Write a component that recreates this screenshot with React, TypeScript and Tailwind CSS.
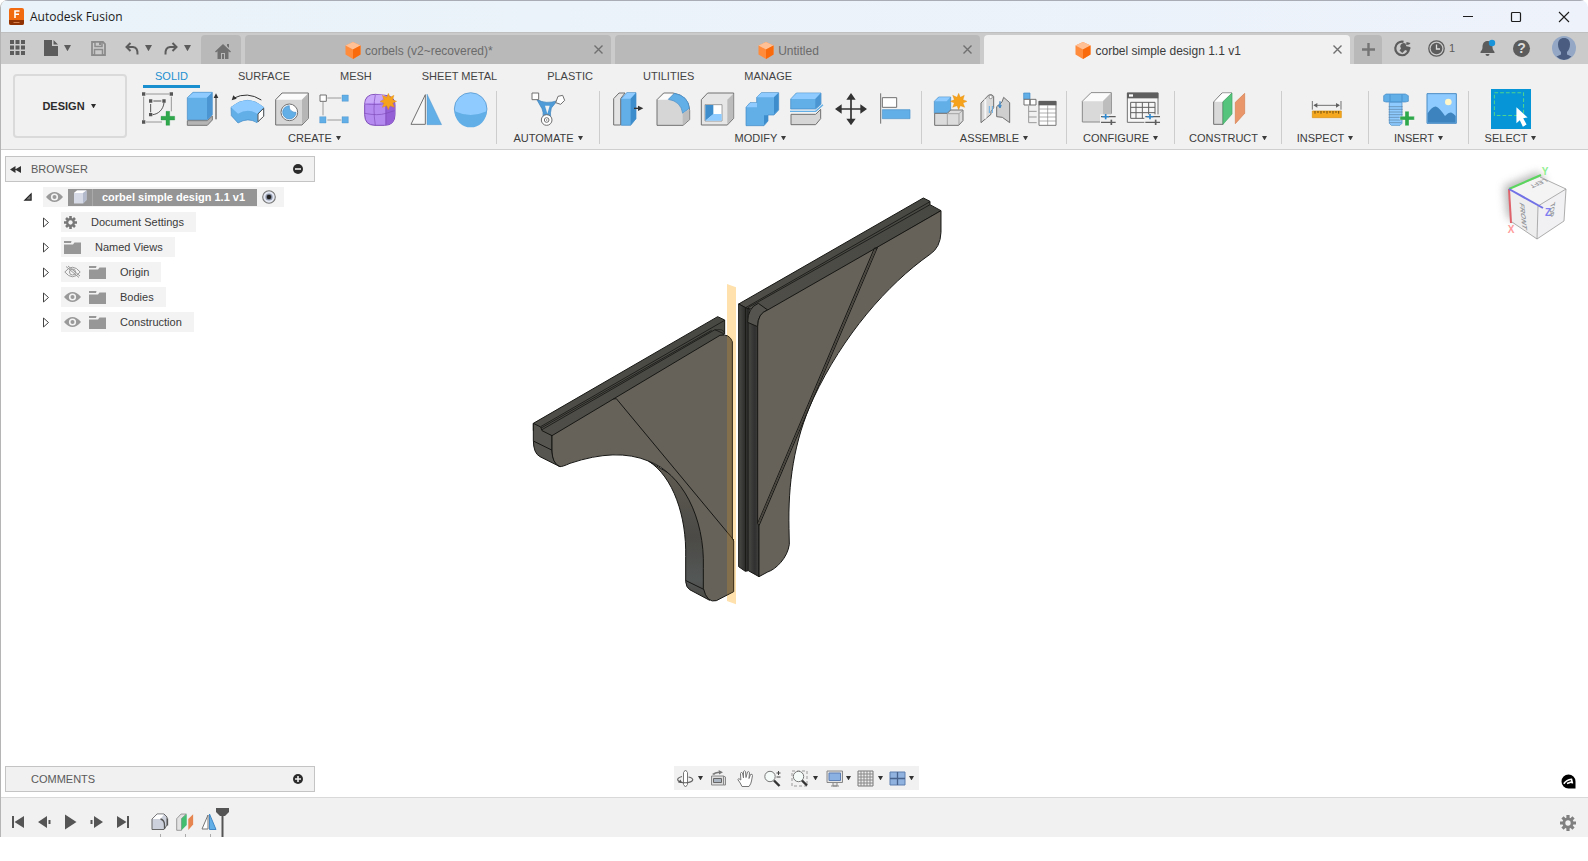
import type { ReactNode } from "react";

type GlyphProps = { box: string; className?: string; children: ReactNode };

function Glyph({ box, className = "size-9", children }: GlyphProps) {
  return (
    <svg viewBox={box} className={`block shrink-0 overflow-visible ${className}`} fill="none" aria-hidden="true">
      {children}
    </svg>
  );
}

function Caret({ className = "w-[5px]" }: { className?: string }) {
  return (
    <svg viewBox="0 0 10 9" className={`block shrink-0 ${className}`} aria-hidden="true">
      <path d="M0 0h10L5 9z" fill="currentColor" />
    </svg>
  );
}

/* ---------- ribbon icons ---------- */

const ink = "#707070";
const blue = "#62aee6";
const sky = "#8fcbff";
const deep = "#4189c6";

const SketchIcon = () => (
  <Glyph box="419 273 108 108">
    <path d="M440 282h70M433 290v70M440 366h48M516 290v44" stroke="#6a6a6a" strokeWidth="2" />
    <path d="M462 303h24M454 312v25M494 308c-2 20-16 34-34 36" stroke="#555" strokeWidth="3" />
    <g fill="#555">
      <path d="M428 277h10v10h-10zM511 277h10v10h-10zM428 361h10v10h-10zM449 298h10v10h-10zM489 298h10v10h-10zM449 339h10v10h-10z" />
    </g>
    <path d="M500 334h11v15h15v11h-15v16h-11v-16h-15v-11h15z" fill="#2fa84c" stroke="#1e9140" strokeWidth="1" />
  </Glyph>
);

const ExtrudeIcon = () => (
  <Glyph box="554 273 108 108">
    <path d="M564 362h60l15-14v12l-15 16h-60z" fill="#b5b5b5" stroke="#777" strokeWidth="3" />
    <path d="M564 293l17-16h58v67l-15 15h-60z" fill={blue} stroke={deep} strokeWidth="2" />
    <path d="M565 293l17-15h56l-15 15z" fill={sky} />
    <path d="M623 293l15-15v66l-15 15z" fill="#4a95d2" />
    <path d="M650 358v-66" stroke="#333" strokeWidth="3" />
    <path d="M643 294l7-14 7 14z" fill="#333" />
  </Glyph>
);

const RevolveIcon = () => (
  <Glyph box="689 273 108 108">
    <path d="M695 322q50-42 98 0v25l-20 21q-27-17-57 1l-20-22z" fill={blue} stroke={deep} strokeWidth="2" />
    <path d="M695 322q50-42 98 0l-20 19q-27-17-57 0z" fill={sky} />
    <path d="M776 342l17-17v24l-17 16z" fill="#fff" stroke="#555" strokeWidth="3" />
    <path d="M702 295q42-22 84 5" stroke="#333" strokeWidth="3" />
    <path d="M697 301l5-15 10 10z" fill="#333" />
  </Glyph>
);

const HoleIcon = () => (
  <Glyph box="824 273 108 108">
    <path d="M829 299l19-20h79v76l-19 20h-79z" fill="#d6d6d6" stroke={ink} strokeWidth="3" />
    <path d="M831 299l18-18h76l-18 18z" fill="#fbfbfb" />
    <path d="M908 299l18-18v73l-18 19z" fill="#b6b6b6" />
    <circle cx="870" cy="337" r="25" fill="#fff" stroke={ink} strokeWidth="3" />
    <path d="M870 317a20 20 0 1 0 20 20c-12 1-22-9-20-20z" fill={blue} stroke={deep} strokeWidth="2" />
  </Glyph>
);

const PatternIcon = () => (
  <Glyph box="959 273 108 108">
    <path d="M984 294h42M971 306v40M984 360h42" stroke={ink} strokeWidth="2" />
    <path d="M962 285h19v19h-19z" fill="#fff" stroke={ink} strokeWidth="3" />
    <path d="M1028 285h19v19h-19zM1028 350h19v19h-19zM961 350h19v19h-19z" fill={blue} stroke={deep} strokeWidth="1" />
  </Glyph>
);

const Spark = ({ x, y }: { x: number; y: number }) => (
  <path
    transform={`translate(${x} ${y})`}
    d="M0-24l5 12 12-6-4 13 12 5-12 5 5 13-13-5-5 12-5-12-13 5 5-13-12-5 12-5-5-13 13 6z"
    fill="#f6a21c"
    stroke="#e08a00"
    strokeWidth="1"
  />
);

const FormIcon = () => (
  <Glyph box="1094 273 108 108">
    <path d="M1096 313q0-30 32-30l30 3q29 3 29 28v30q0 32-32 32h-28q-31 0-31-32z" fill="#b48af0" stroke="#7e4cb8" strokeWidth="3" />
    <path d="M1097 312q2-28 32-28h28l-16 26q-24-4-44 2z" fill="#c9a8fa" />
    <path d="M1158 310q20-6 28 0v34q0 30-28 31z" fill="#9560d6" />
    <path d="M1096 340q40 8 64 0l26-8M1128 284q-8 40 0 92M1160 310v65M1097 312q40 4 62-2" stroke="#7e4cb8" strokeWidth="2" />
    <Spark x={1167} y={304} />
  </Glyph>
);

const MirrorIcon = () => (
  <Glyph box="25 273 108 108">
    <path d="M74 284v89H31z" fill="#f7f7f7" stroke={ink} strokeWidth="3" />
    <path d="M79 282l44 92H79z" fill={blue} stroke={deep} strokeWidth="1" />
  </Glyph>
);

const SphereIcon = () => (
  <Glyph box="161 273 108 108">
    <circle cx="211" cy="327" r="49" fill={sky} stroke={deep} strokeWidth="2" />
    <path d="M163 334q48 22 96 0a48 48 0 0 1-96 0z" fill={blue} />
  </Glyph>
);

const AutomateIcon = () => (
  <Glyph box="392 273 108 108">
    <path d="M412 298q28 16 62 4l-18 22q-4 14-2 30h-23q2-18-3-28z" fill="#4e9bd8" stroke="#3a7fb8" strokeWidth="2" />
    <path d="M437 317h14l-7 24z" fill="#f1f1f1" />
    <path d="M398 279h20v20h-20z" fill="#fff" stroke={ink} strokeWidth="3" />
    <path d="M476 289l14-3 6 15-12 12-15-5z" fill="#fff" stroke={ink} strokeWidth="3" />
    <circle cx="442" cy="360" r="16" fill="#fff" stroke={ink} strokeWidth="3" />
    <circle cx="442" cy="360" r="7" stroke={ink} strokeWidth="3" />
    <circle cx="442" cy="360" r="2" fill={ink} />
  </Glyph>
);

const PressPullIcon = () => (
  <Glyph box="624 273 108 108">
    <path d="M641 296l16-17h18l-13 17v79h-21z" fill="#e4e4e4" stroke={ink} strokeWidth="3" />
    <path d="M664 296l16-18h28v78l-16 20h-28z" fill={blue} stroke={deep} strokeWidth="2" />
    <path d="M665 296l16-17h26l-15 17z" fill={sky} />
    <path d="M692 296l16-17v77l-16 19z" fill="#3d8dcc" />
    <path d="M702 325h14" stroke="#333" strokeWidth="4" />
    <path d="M714 317l16 8-16 8z" fill="#333" />
  </Glyph>
);

const FilletIcon = () => (
  <Glyph box="759 273 108 108">
    <path d="M771 299l20-20h28q48 8 50 52v28l-20 17h-78z" fill="#d6d6d6" stroke={ink} strokeWidth="3" />
    <path d="M773 299l19-18h28l-16 18z" fill="#fbfbfb" />
    <path d="M805 298l18-18q42 8 45 45l-20 15q-5-36-43-42z" fill={blue} stroke={deep} strokeWidth="2" />
    <path d="M848 341l20-14v32l-20 16z" fill="#bdbdbd" />
  </Glyph>
);

const ShellIcon = () => (
  <Glyph box="894 273 108 108">
    <path d="M904 299l19-20h78v76l-19 20h-78z" fill="#e6e6e6" stroke={ink} strokeWidth="3" />
    <path d="M982 299l18-18v73l-18 19z" fill="#bcbcbc" />
    <path d="M915 314h51v49h-51z" fill="#fff" stroke="#777" strokeWidth="2" />
    <path d="M916 315h24v28l-24 19z" fill="#3d8dcc" />
    <path d="M916 362l24-20h25v20z" fill={sky} />
  </Glyph>
);

const CombineIcon = () => (
  <Glyph box="1029 273 108 108">
    <path d="M1038 322l12-14h20v-16l14-14h52v52l-14 15h-18v18l-12 14h-54z" fill={blue} stroke={deep} strokeWidth="2" />
    <path d="M1070 292l14-13h51l-13 13zM1039 322l12-13h20v13z" fill={sky} />
    <path d="M1122 292l13-13v50l-13 14zM1092 346h12v16l-12 13z" fill="#3d8dcc" />
  </Glyph>
);

const SplitIcon = () => (
  <Glyph box="-36 273 108 108">
    <path d="M-28 297l17-18h74v34l-16 14h-75z" fill={blue} stroke={deep} strokeWidth="2" />
    <path d="M-27 297l17-17h72l-16 17z" fill={sky} />
    <path d="M46 297l16-17v32l-16 14z" fill="#4a95d2" />
    <path d="M-30 334h77l22-20" stroke={blue} strokeWidth="4" />
    <path d="M-27 343h74l15-15v28l-15 18h-74z" fill="#d6d6d6" stroke={ink} strokeWidth="3" />
  </Glyph>
);

const MoveIcon = () => (
  <Glyph box="99 273 108 108">
    <path d="M153 292v70M118 327h70" stroke="#333" strokeWidth="5" />
    <path d="M153 279l14 20h-28zM153 376l14-20h-28zM105 327l20-14v28zM201 327l-20-14v28z" fill="#333" />
  </Glyph>
);

const AlignIcon = () => (
  <Glyph box="234 273 108 108">
    <path d="M242 280v91" stroke={ink} strokeWidth="3" />
    <path d="M247 293h43v29h-43z" fill="#fff" stroke={ink} strokeWidth="3" />
    <path d="M247 329h83v27h-83z" fill={blue} stroke="#4d94cb" strokeWidth="2" />
  </Glyph>
);

const NewComponentIcon = () => (
  <Glyph box="395 273 108 108">
    <path d="M405 304l13-13h36v40l-10 9h-39z" fill={blue} stroke={deep} strokeWidth="2" />
    <path d="M406 304l13-12h34l-11 12z" fill={sky} />
    <path d="M406 340h38l10-10h37v32l-13 14h-72z" fill="#dcdcdc" stroke={ink} strokeWidth="3" />
    <path d="M444 341v34M446 341h33l11-10M479 342v33" stroke="#8a8a8a" strokeWidth="2" />
    <Spark x={478} y={304} />
  </Glyph>
);

const JointIcon = () => (
  <Glyph box="530 273 108 108">
    <path d="M545 309l23-24q10-4 15 4v34l-8 12v8l-30 25z" fill="#d9d9d9" stroke={ink} strokeWidth="3" />
    <path d="M558 298v58" stroke="#f7f7f7" strokeWidth="6" />
    <circle cx="574" cy="291" r="5" fill="#fff" stroke={ink} strokeWidth="2" />
    <path d="M570 318v21M579 318v21" stroke={blue} strokeWidth="3" />
    <path d="M608 306l5-14 18 16v60l-22-16-17-2v-30z" fill="#cfcfcf" stroke={ink} strokeWidth="3" />
    <path d="M602 304v20" stroke={deep} strokeWidth="4" />
    <path d="M594 316h14l-6 9z" fill={deep} />
  </Glyph>
);

const BomIcon = () => (
  <Glyph box="665 273 108 108">
    <path d="M688 318v50h24M688 334h24M688 351h24" stroke="#999" strokeWidth="3" />
    <path d="M673 279h19v19h-19z" fill={blue} stroke={deep} strokeWidth="2" />
    <path d="M674 298h18v17h-18zM692 298h18v17h-18z" fill="#fff" stroke={ink} strokeWidth="3" />
    <path d="M719 304h51v72h-51z" fill="#fff" stroke="#777" strokeWidth="3" />
    <path d="M718 303h53v13h-53z" fill="#5f5f5f" />
    <path d="M720 327h50M720 339h50M720 351h50M720 363h50M745 316v60" stroke="#888" strokeWidth="2" />
  </Glyph>
);

const Sliders = ({ x, y }: { x: number; y: number }) => (
  <g transform={`translate(${x} ${y})`}>
    <path d="M-3-5h48v28H-3z" fill="#f1f1f1" />
    <path d="M0 2h44M0 19h44" stroke="#5f5f5f" strokeWidth="4" />
    <path d="M14-6v16" stroke="#2f87cc" strokeWidth="5" />
    <path d="M4 2h20" stroke="#2f87cc" strokeWidth="4" />
    <path d="M31 11v16" stroke="#5f5f5f" strokeWidth="5" />
  </g>
);

const ConfigureIcon = () => (
  <Glyph box="841 273 108 108">
    <path d="M848 304l26-26h61v62l-26 26h-61z" fill="#d9d9d9" stroke="#8a8a8a" strokeWidth="3" />
    <path d="M850 304l25-24h58l-24 24z" fill="#fbfbfb" />
    <path d="M910 304l24-24v60l-24 24z" fill="#bdbdbd" />
    <Sliders x={904} y={348} />
  </Glyph>
);

const ConfigTableIcon = () => (
  <Glyph box="976 273 108 108">
    <path d="M983 279h92v88h-92z" fill="#f7f7f7" stroke={ink} strokeWidth="3" />
    <path d="M982 278h94v17h-94z" fill="#5f5f5f" />
    <path d="M988 283h12v7h-12z" fill="#fff" />
    <path d="M993 307h73v48h-73zM993 322h73M993 338h73M1009 307v48M1028 307v48M1047 307v48" stroke="#5f5f5f" strokeWidth="3" />
    <Sliders x={1037} y={348} />
  </Glyph>
);

const ConstructIcon = () => (
  <Glyph box="68 273 108 108">
    <path d="M79 306l25-27h30l-27 26v68H79z" fill="#d9d9d9" stroke={ink} strokeWidth="3" />
    <path d="M81 305l24-25h28l-26 25z" fill="#fff" />
    <path d="M107 305l27-26v63l-27 31z" fill="#56c47c" stroke="#3fa864" strokeWidth="2" />
    <path d="M144 307l28-27v60l-28 31z" fill="#e8966a" stroke="#d67d4d" strokeWidth="2" />
  </Glyph>
);

const InspectIcon = () => (
  <Glyph box="358 273 108 108">
    <path d="M374 303v26M460 303v26M380 316h74" stroke={ink} strokeWidth="3" />
    <path d="M377 316l12-7v14zM457 316l-12-7v14z" fill="#5f5f5f" />
    <path d="M374 333h87v20h-87z" fill="#f5a81d" stroke="#d98e0b" strokeWidth="2" />
    <path d="M382 333v8M391 333v6M400 333v8M409 333v6M418 333v8M427 333v6M436 333v8M445 333v6M453 333v8" stroke="#6b4a10" strokeWidth="3" />
  </Glyph>
);

const FastenerIcon = () => (
  <Glyph box="572 273 108 108">
    <path d="M589 287l7-5h58l9 5v17l-9 2h-58l-7-2z" fill={blue} stroke={deep} strokeWidth="2" />
    <path d="M608 284v20M644 284v20" stroke={deep} strokeWidth="2" />
    <path d="M606 307h38v63l-6 6h-26l-6-6z" fill={sky} stroke={deep} strokeWidth="2" />
    <path d="M604 320h42M604 328h42M604 336h42M604 344h42M604 352h42M604 360h42M606 368h36" stroke="#5b7f9e" strokeWidth="2" />
    <path d="M653 334h12v15h16v11h-16v17h-12v-17h-15v-11h15z" fill="#2fa84c" stroke="#fff" strokeWidth="1" />
  </Glyph>
);

const ImageIcon = () => (
  <Glyph box="707 273 108 108">
    <path d="M719 281h88v89h-88z" fill={sky} stroke="#4b8cc4" strokeWidth="3" />
    <path d="M721 340q14-22 26-20 10 4 26 28 12-12 20-10 6 3 12 10v20h-84z" fill="#3d83bd" />
    <circle cx="783" cy="306" r="10" fill="#fff6c9" />
  </Glyph>
);

const SelectIcon = () => (
  <Glyph box="0 0 118 118" className="size-10">
    <path d="M0 0h118v118H0z" fill="#0696d7" />
    <path d="M10 11h86v67H10z" stroke="#4fd48d" strokeWidth="3" strokeDasharray="11 6" />
    <path d="M75 54l33 30-13 2 10 19-11 6-9-19-10 9z" fill="#fff" />
  </Glyph>
);

type Group = { label: string; width: string; icons: [string, () => ReactNode][] };

const groups: Group[] = [
  {
    label: "CREATE",
    width: "w-[364px]",
    icons: [
      ["Create Sketch", SketchIcon],
      ["Extrude", ExtrudeIcon],
      ["Revolve", RevolveIcon],
      ["Hole", HoleIcon],
      ["Pattern", PatternIcon],
      ["Create Form", FormIcon],
      ["Mirror", MirrorIcon],
      ["Sphere", SphereIcon],
    ],
  },
  { label: "AUTOMATE", width: "w-[103px]", icons: [["Automated Modeling", AutomateIcon]] },
  {
    label: "MODIFY",
    width: "w-[322px]",
    icons: [
      ["Press Pull", PressPullIcon],
      ["Fillet", FilletIcon],
      ["Shell", ShellIcon],
      ["Combine", CombineIcon],
      ["Split Body", SplitIcon],
      ["Move", MoveIcon],
      ["Align", AlignIcon],
    ],
  },
  {
    label: "ASSEMBLE",
    width: "w-[145px]",
    icons: [
      ["New Component", NewComponentIcon],
      ["Joint", JointIcon],
      ["Bill of Materials", BomIcon],
    ],
  },
  {
    label: "CONFIGURE",
    width: "w-[108px]",
    icons: [
      ["Configure", ConfigureIcon],
      ["Configuration Table", ConfigTableIcon],
    ],
  },
  { label: "CONSTRUCT", width: "w-[107px]", icons: [["Offset Plane", ConstructIcon]] },
  { label: "INSPECT", width: "w-[87px]", icons: [["Measure", InspectIcon]] },
  {
    label: "INSERT",
    width: "w-[100px]",
    icons: [
      ["Insert Fastener", FastenerIcon],
      ["Canvas", ImageIcon],
    ],
  },
  { label: "SELECT", width: "w-[84px]", icons: [["Select", SelectIcon]] },
];

const workspaceTabs = ["SOLID", "SURFACE", "MESH", "SHEET METAL", "PLASTIC", "UTILITIES", "MANAGE"];

function Ribbon() {
  return (
    <section className="flex h-[86px] shrink-0 border-b border-[#cfcfcf] bg-[#f1f1f1] pl-3">
      <button className="mt-2.5 flex h-16 w-[114px] shrink-0 items-center justify-center gap-1.5 rounded border-2 border-[#dadada] pr-0.5 text-[11px] font-bold text-[#2c2c2c]">
        DESIGN
        <Caret />
      </button>
      <div className="ml-1.5 min-w-0">
        <nav className="ml-[22px] flex h-6 gap-[50px] text-[11px] text-[#444]">
          {workspaceTabs.map((tab, i) => (
            <button
              key={tab}
              className={
                i === 0
                  ? "-mx-3 border-b-3 border-[#1a8fd0] px-3 pt-1 text-[#1a8fd0]"
                  : "border-b-3 border-transparent pt-1"
              }
            >
              {tab}
            </button>
          ))}
        </nav>
        <div className="mt-[3px] flex">
          {groups.map((group, i) => (
            <div
              key={group.label}
              className={`flex h-[53px] shrink-0 flex-col items-center border-r ${group.width} ${
                i === groups.length - 1 ? "border-transparent" : "border-[#cdcdcd]"
              }`}
            >
              <div className="flex h-[35px] items-center">
                {group.icons.map(([name, Icon]) => (
                  <button key={name} aria-label={name} className="flex w-[45px] justify-center">
                    <Icon />
                  </button>
                ))}
              </div>
              <button className="mt-1 flex items-center gap-1 text-[11px] leading-4 text-[#3c3c3c]">
                {group.label}
                <Caret />
              </button>
            </div>
          ))}
        </div>
      </div>
    </section>
  );
}

/* ---------- title and document tabs ---------- */

function TitleBar() {
  return (
    <header className="flex h-8 shrink-0 items-center border-t border-[#a9abb5] bg-gradient-to-r from-[#eaf3f9] to-[#edf2fb] pl-2">
      <Glyph box="0 0 15 17" className="h-[17px] w-[15px]">
        <rect width="15" height="17" rx="2" fill="#f26a10" />
        <path d="M0 12h15v3a2 2 0 0 1-2 2H2a2 2 0 0 1-2-2z" fill="#8f3305" />
        <path d="M6 10V3h4.500M6 6.300h4" stroke="#fff" strokeWidth="1.600" />
        <path d="M4.500 14.500h6" stroke="#d7804c" />
      </Glyph>
      <h1 className="ml-1.5 font-['Open_Sans','Noto_Sans',sans-serif] text-xs text-[#1b1b1b]">Autodesk Fusion</h1>
      <div className="ml-auto flex text-[#1d1d1d]">
        <button aria-label="Minimize" className="flex h-8 w-12 items-center justify-center">
          <Glyph box="0 0 12 12" className="size-3"><path d="M1 5.500h10" stroke="currentColor" /></Glyph>
        </button>
        <button aria-label="Maximize" className="flex h-8 w-12 items-center justify-center">
          <Glyph box="0 0 12 12" className="size-3"><rect x="1.500" y="1.500" width="9" height="9" rx="1" stroke="currentColor" strokeWidth="1.200" /></Glyph>
        </button>
        <button aria-label="Close" className="flex h-8 w-12 items-center justify-center">
          <Glyph box="0 0 12 12" className="size-3"><path d="M1 1l10 10M11 1L1 11" stroke="currentColor" strokeWidth="1.100" /></Glyph>
        </button>
      </div>
    </header>
  );
}

const DocCube = () => (
  <Glyph box="0 0 16 17" className="h-[17px] w-4">
    <path d="M8 0l7.500 3.500v9L8 17 .5 12.500v-9z" fill="#ff8b3d" />
    <path d="M8 0l7.500 3.500L8 7.500.5 3.500z" fill="#ffc095" />
    <path d="M15.500 3.500v9L8 17V7.500z" fill="#f96a0d" />
  </Glyph>
);

function DocTab({ title, active }: { title: string; active?: boolean }) {
  return (
    <div
      className={`flex h-[29px] min-w-0 flex-1 items-center rounded-t pr-[7px] ${
        active ? "bg-[#f1f1f1] text-[#3b3b3b]" : "bg-[#b9b9b9] text-[#6b6b6b]"
      }`}
    >
      <button className="flex min-w-0 flex-1 items-center justify-center gap-1 pt-0.5 text-xs">
        <DocCube />
        <span className="truncate">{title}</span>
      </button>
      <button aria-label={`Close ${title}`}>
        <Glyph box="0 0 11 11" className="size-[11px]">
          <path d="M1.500 1.500l8 8M9.500 1.500l-8 8" stroke="#707070" strokeWidth="1.400" />
        </Glyph>
      </button>
    </div>
  );
}

function DocumentBar() {
  return (
    <div className="flex h-8 shrink-0 items-end border-t border-[#bfbfbf] bg-[#cbcbcb] text-[#5c5c5c]">
      <div className="flex h-8 w-[200px] shrink-0 items-center pl-[9px]">
        <button aria-label="Data panel">
          <Glyph box="0 0 16 16" className="size-4">
            <path d="M0 0h4v4H0zM5.500 0h4v4h-4zM11 0h4v4h-4zM0 5.500h4v4H0zM5.500 5.500h4v4h-4zM11 5.500h4v4h-4zM0 11h4v4H0zM5.500 11h4v4h-4zM11 11h4v4h-4z" fill="currentColor" />
          </Glyph>
        </button>
        <button aria-label="File" className="ml-[18px] flex items-center gap-1.5">
          <Glyph box="0 0 14 16" className="h-4 w-3.5"><path d="M0 0h8v6h6v10H0zM9.500 0L14 4.500H9.500z" fill="currentColor" /></Glyph>
          <Caret className="w-[7px]" />
        </button>
        <button aria-label="Save" className="ml-5">
          <Glyph box="0 0 15 15" className="size-[15px]">
            <path d="M1 1h11l2 2v11H1z" fill="#ccc" stroke="#8b8b8b" strokeWidth="1.800" />
            <path d="M4 1h7v4.500H4zM3.500 8.500h8V14h-8z" fill="#c9c9c9" stroke="#8b8b8b" strokeWidth="1.500" />
            <path d="M8 1h2v3H8z" fill="#8b8b8b" />
          </Glyph>
        </button>
        <button aria-label="Undo" className="ml-[19px] flex items-center gap-1.5">
          <Glyph box="0 0 14 13" className="h-[13px] w-3.5">
            <path d="M1.500 5h6.500Q13 5.500 12.500 12.500M5.500 1L1.500 5l4 4" stroke="currentColor" strokeWidth="2" />
          </Glyph>
          <Caret className="w-[7px]" />
        </button>
        <button aria-label="Redo" className="ml-3 flex items-center gap-1.5">
          <Glyph box="0 0 14 13" className="h-[13px] w-3.5">
            <path d="M12.500 5H6Q1 5.500 1.500 12.500M8.500 1l4 4-4 4" stroke="currentColor" strokeWidth="2" />
          </Glyph>
          <Caret className="w-[7px]" />
        </button>
      </div>
      <div className="flex min-w-0 flex-1 gap-1">
        <button aria-label="Home" className="flex h-[29px] w-10 shrink-0 items-center justify-center rounded-t bg-[#b9b9b9] pt-1 pl-1">
          <Glyph box="0 0 16 15" className="h-[15px] w-4">
            <path d="M8 0l8 7.500-1 1-1.500-1.300V15H10V9H6v6H2.500V7.200L1 8.500l-1-1zM12 0h2v4l-2-2z" fill="#707070" />
            <path d="M7 10h2v5H7z" fill="#707070" />
          </Glyph>
        </button>
        <DocTab title="corbels (v2~recovered)*" />
        <DocTab title="Untitled" />
        <DocTab title="corbel simple design 1.1 v1" active />
        <button aria-label="New design" className="flex h-[29px] w-7 shrink-0 items-center justify-center rounded-t bg-[#b9b9b9]">
          <Glyph box="0 0 13 13" className="size-[13px]"><path d="M6.500 0v13M0 6.500h13" stroke="#757575" strokeWidth="2.400" /></Glyph>
        </button>
      </div>
      <div className="flex h-8 w-[206px] shrink-0 items-center pl-3">
        <button aria-label="Extensions">
          <Glyph box="0 0 17 17" className="size-[17px]">
            <path d="M14.800 7.500A6.800 6.800 0 1 1 9.500 1.800" stroke="currentColor" strokeWidth="2.200" />
            <path d="M6.200 6.500a3.600 3.600 0 0 1 5.300-3l.8 2.700 2.800.6 1.700 1a3.600 3.600 0 0 1-5.600 2.200L8.300 13 5.500 10.500 7 8.500z" fill="currentColor" />
            <path d="M12.500 2l-.3 3 3-.4L16.500 3z" fill="currentColor" />
          </Glyph>
        </button>
        <button aria-label="Job status" className="ml-[17px] flex items-center gap-1 text-[11px]">
          <Glyph box="0 0 17 17" className="size-[17px]">
            <circle cx="8.500" cy="8.500" r="7.700" stroke="currentColor" strokeWidth="1.300" />
            <circle cx="8.500" cy="8.500" r="5.800" fill="currentColor" />
            <path d="M8.500 4.500v4.500h3.500" stroke="#ddd" strokeWidth="1.300" />
          </Glyph>
          1
        </button>
        <button aria-label="Notifications" className="ml-[25px]">
          <Glyph box="0 0 16 16" className="size-4">
            <path d="M7 1c-4 .5-4.500 4-4.500 6.500C2.500 10 1 10.500.5 12v1h14v-1c-.5-1.500-2-2-2-4.500C12.500 5 12 1.500 8 1z" fill="currentColor" />
            <path d="M5.500 14h4a2 2 0 0 1-4 0z" fill="currentColor" />
            <circle cx="12" cy="3" r="3.200" fill="#1994da" />
          </Glyph>
        </button>
        <button
          aria-label="Help"
          className="ml-[17px] flex size-[17px] items-center justify-center rounded-full bg-[#5c5c5c] text-sm leading-none font-bold text-[#dcdcdc]"
        >
          ?
        </button>
        <button aria-label="Account" className="ml-[22px]">
          <Glyph box="0 0 24 24" className="size-6">
            <circle cx="12" cy="12" r="12" fill="#94a8c6" />
            <path d="M12 2c4 0 6 2.500 6 6.500 0 3.500-1.500 6-3 7.500v2.500l4.500 2A12 12 0 0 1 12 24a12 12 0 0 1-7.500-3.500L9 18.500V16C7.500 14.500 6 12 6 8.500 6 4.500 8 2 12 2z" fill="#4a5d80" />
          </Glyph>
        </button>
      </div>
    </div>
  );
}

/* ---------- browser tree ---------- */

const Eye = () => (
  <Glyph box="0 0 17 12" className="h-3 w-[17px]">
    <path d="M0 6Q8.500-4 17 6 8.500 16 0 6z" fill="#999" />
    <circle cx="8.500" cy="6" r="3.600" fill="#f3f3f3" />
    <circle cx="8.500" cy="6" r="2" fill="#999" />
  </Glyph>
);

const EyeOff = () => (
  <Glyph box="0 0 17 12" className="h-3 w-[17px]">
    <path d="M.8 6Q8.500-3.500 16.200 6 8.500 15.500.8 6z" stroke="#999" />
    <circle cx="8.500" cy="6" r="3" stroke="#999" />
    <path d="M2 .5l13 11M4 0l12 10" stroke="#999" />
  </Glyph>
);

const Folder = () => (
  <Glyph box="0 0 17 13" className="h-[13px] w-[17px]">
    <path d="M0 3.500h9l1.500-2H17V13H0zM0 0h7.500L7 2H0z" fill="#979797" />
  </Glyph>
);

const Gear = ({ className, hole }: { className: string; hole: string }) => (
  <Glyph box="-9 -9 18 18" className={className}>
    <path d="M0-9v18M-9 0H9M-6.200-6.200L6.200 6.200M-6.200 6.200L6.200-6.200" stroke="currentColor" strokeWidth="3.600" />
    <circle r="6.200" fill="currentColor" />
    <circle r="3" fill={hole} />
  </Glyph>
);

const Twisty = () => (
  <Glyph box="0 0 8 11" className="h-[11px] w-2">
    <path d="M1.500 1v9l5-4.500z" fill="#fff" stroke="#444" />
  </Glyph>
);

const nodes: { label: string; icon: "gear" | "folder"; eye?: "on" | "off" }[] = [
  { label: "Document Settings", icon: "gear" },
  { label: "Named Views", icon: "folder" },
  { label: "Origin", icon: "folder", eye: "off" },
  { label: "Bodies", icon: "folder", eye: "on" },
  { label: "Construction", icon: "folder", eye: "on" },
];

function PanelBar({ title, sign, collapsible }: { title: string; sign: "plus" | "minus"; collapsible?: boolean }) {
  return (
    <div className="flex h-[26px] w-[310px] items-center border border-[#c4c4c4] bg-[#f1f1f1] pr-[11px] pl-1 text-[11px] text-[#5a5a5a]">
      <div className="w-[21px]">
        {collapsible && (
          <button aria-label="Collapse panel" className="block">
            <Glyph box="0 0 11 7" className="h-[7px] w-[11px]"><path d="M5.500 0v7L0 3.500zM11 0v7L5 3.500z" fill="#333" /></Glyph>
          </button>
        )}
      </div>
      <h2>{title}</h2>
      <button aria-label={`${title} options`} className="ml-auto">
        <Glyph box="0 0 10 10" className="size-2.5">
          <circle cx="5" cy="5" r="5" fill="#2b2b2b" />
          <path d={sign === "plus" ? "M2 5h6M5 2v6" : "M2 5h6"} stroke="#eee" strokeWidth="1.600" />
        </Glyph>
      </button>
    </div>
  );
}

function BrowserPanel() {
  return (
    <aside className="absolute top-1.5 left-1">
      <PanelBar title="BROWSER" sign="minus" collapsible />
      <ul className="mt-[5px] flex flex-col gap-[5px] text-[11px] text-[#3a3a3a]">
        <li className="flex h-5 items-center pl-[19px]">
          <button aria-label="Collapse root">
            <Glyph box="0 0 9 9" className="size-2"><path d="M8 1v7H1z" fill="#777" stroke="#222" strokeWidth="1.300" /></Glyph>
          </button>
          <div className="ml-[11px] flex h-5 items-center bg-[#f3f3f3] pr-2 pl-[3px]">
            <button aria-label="Toggle visibility" className="w-[22px]"><Eye /></button>
            <button className="flex h-[17px] items-center bg-[#959595] pr-3 pl-[5px] font-bold text-white">
              <Glyph box="0 0 14 14" className="size-3.5">
                <path d="M1 3l3-2.500h9.500V10L10 13.500H1z" fill="#d5dae6" />
                <path d="M1 3l3-2.500h9.500L10 3z" fill="#fff" />
                <path d="M13.500.5V10L10 13.500V3z" fill="#b3bacb" />
              </Glyph>
              <span className="ml-[5px] h-[17px] border-l border-[#aaa] pl-[9px] leading-[17px]">corbel simple design 1.1 v1</span>
            </button>
            <button aria-label="Activate component" className="ml-[5px]">
              <Glyph box="0 0 14 14" className="size-3.5">
                <circle cx="7" cy="7" r="6.300" fill="#e4e8f2" stroke="#777" strokeWidth="1.100" />
                <circle cx="7" cy="7" r="3.600" fill="#8a93a8" />
                <circle cx="7" cy="7" r="2.300" fill="#222" />
              </Glyph>
            </button>
          </div>
        </li>
        {nodes.map((node) => (
          <li key={node.label} className="flex h-5 items-center pl-[37px]">
            <button aria-label={`Expand ${node.label}`}><Twisty /></button>
            <div className="ml-[11px] flex h-5 items-center bg-[#f3f3f3] pr-3 pl-[3px]">
              {node.eye && (
                <button aria-label={`Toggle ${node.label}`} className="mr-2">
                  {node.eye === "on" ? <Eye /> : <EyeOff />}
                </button>
              )}
              {node.icon === "gear" ? <span className="text-[#777]"><Gear className="size-[13px]" hole="#f3f3f3" /></span> : <Folder />}
              <span className="ml-3.5">{node.label}</span>
            </div>
          </li>
        ))}
      </ul>
    </aside>
  );
}

/* ---------- 3D model ---------- */

function Model() {
  const face = "#66625a";
  return (
    <svg viewBox="520 190 440 430" className="mt-10 block h-[430px] w-[440px]" role="img" aria-label="Two corbels and a construction plane">
      <defs>
        <linearGradient id="side" x1="0" x2="1" y1="0" y2="0">
          <stop offset="0" stopColor="#4a4a47" />
          <stop offset="0.300" stopColor="#2e2e2c" />
          <stop offset="0.550" stopColor="#434340" />
          <stop offset="0.800" stopColor="#2f302f" />
          <stop offset="1" stopColor="#454543" />
        </linearGradient>
        <linearGradient id="rail" x1="0" x2="1" y1="1" y2="0">
          <stop offset="0" stopColor="#4f4e48" />
          <stop offset="1" stopColor="#484843" />
        </linearGradient>
        <linearGradient id="inner" x1="0" x2="0" y1="0" y2="1">
          <stop offset="0" stopColor="#625d53" />
          <stop offset="0.550" stopColor="#4b4a46" />
          <stop offset="0.850" stopColor="#535756" />
          <stop offset="1" stopColor="#4a4844" />
        </linearGradient>
      </defs>
      <g transform="translate(520 270) scale(0.33333)" strokeLinejoin="round">
        <path d="M621 42l27 10v951l-27-10z" fill="#fee1ad" />
        <g stroke="#161614" strokeWidth="3">
          <path d="M40 460L593 140l21 10v42l-500 310-74-20z" fill="url(#rail)" />
          <path d="M62 470L614 151M66 479L585 179l26 12M62 475L575 181" fill="none" strokeWidth="2.500" />
          <path d="M40 460l22 11 4 11 30 15v50q4 35 24 43l-60-30q-20-10-20-50z" fill="#57554f" />
          <path d="M42 514l55 27" fill="none" />
          <path d="M385 573C460 620 500 740 497 860v75q2 18 12 24l60 32 20-200-90-150z" fill="url(#inner)" />
          <path
            d="M96 497L600 196q28-6 37 19v590l4 8v152l-52 27q-28 8-39-37v-60C555 740 485 610 385 573Q290 533 150 580q-22 10-30 10-24-10-24-50z"
            fill={face}
          />
          <path d="M280 387l9-1 352 424M498 932l53 26" fill="none" />
          <path d="M585 180q25-5 28 8" fill="none" strokeWidth="2" />
        </g>
        <path d="M621 197q12 4 16 18v590l4 8v152l-20 10z" fill="#f0a020" opacity="0.220" />
      </g>
      <g transform="translate(720 185) scale(0.33333)" stroke="#161614" strokeWidth="3" strokeLinejoin="round">
        <path d="M56 357L610 39l20 10v10l33 18L143 380l-66-11z" fill="url(#rail)" />
        <path d="M56 357l21 11 40 20v787l-32-18-9 2-20-14z" fill="url(#side)" />
        <path d="M77 368L630 50M84 368L630 59" fill="none" strokeWidth="2.500" />
        <path d="M77 368v790M84 370v787" fill="none" />
        <path d="M83 412q0-44 32-57l28 20q-30 10-30 50z" fill="#55544e" />
        <path
          d="M143 375L663 77v65q-2 46-33 66C500 300 370 450 280 640 220 770 204 900 207 1030L208 1078C203 1118 168 1153 143 1161L117 1175V1022l-4-7V425q0-40 30-50z"
          fill={face}
        />
        <path d="M463 190L113 1015M472 188L117 1022M462 190l12-2" fill="none" />
        <path d="M467 192L115 1017" stroke="#48453e" strokeWidth="4" />
      </g>
    </svg>
  );
}

function ViewCube() {
  return (
    <svg viewBox="0 0 118 100" className="absolute top-1.5 right-0 h-[100px] w-[118px]" role="img" aria-label="View cube">
      <defs>
        <filter id="soft" x="-50%" y="-50%" width="200%" height="200%">
          <feGaussianBlur stdDeviation="4" />
        </filter>
      </defs>
      <path d="M34 30l34-14 8 10-30 40-9-6z" fill="#999" opacity="0.700" filter="url(#soft)" />
      <path d="M39 33l31-12 26 12-28 17z" fill="#f4f4f5" />
      <path d="M39 33l29 17-1 33-25-17z" fill="#eeeeef" />
      <path d="M68 50l28-17-2 32-27 18z" fill="#f1f1f3" />
      <path d="M70 21l26 12-2 32-27 18-25-17M68 50l28-17M68 50l-1 33" fill="none" stroke="#999" strokeWidth="0.800" />
      <g fill="#97999c" fontFamily="Liberation Sans, sans-serif" fontSize="8" fontWeight="bold" textAnchor="middle">
        <text transform="matrix(-0.800 0.350 -0.600 -0.500 67 26)">LEFT</text>
        <text transform="matrix(0.100 0.950 -0.850 -0.450 51 59)">FRONT</text>
        <text transform="matrix(-0.100 0.900 -0.800 0.400 80 55)">TOP</text>
      </g>
      <path d="M39 33l32-14" stroke="#5ad65e" strokeWidth="2" />
      <path d="M39 33l2 34" stroke="#e0636b" strokeWidth="2" />
      <path d="M39 33l34 19" stroke="#7272e6" strokeWidth="2" />
      <g fontFamily="Liberation Sans, sans-serif" fontSize="10" fontWeight="bold" textAnchor="middle">
        <text x="75" y="19" fill="#8ff08f">Y</text>
        <text x="41" y="77" fill="#ff9a9a">X</text>
        <text x="78" y="60" fill="#7f7ff2">Z</text>
      </g>
    </svg>
  );
}

/* ---------- navigation bar ---------- */

const navIcon = "size-[17px]";

function NavBar() {
  return (
    <div className="absolute inset-x-0 bottom-[7px] flex justify-center pl-1">
      <div className="flex h-6 w-[245px] items-center bg-[#f1f1f1] pr-1.5 pl-[3px] text-[#333]">
        <button aria-label="Orbit" className="flex items-center gap-1">
          <Glyph box="0 0 17 17" className={navIcon}>
            <path d="M8.500 0l2 2.500v12l-2 2.500-2-2.500v-12z" fill="#fff" stroke="#777" />
            <path d="M5 6.500C1 7.500 0 9 1 10.500c2.500 3 12 3 14.500 0 1-1.500-1-3-4-3.500" stroke="#666" strokeWidth="1.200" />
            <path d="M3.500 9.500L5 13l-4-.5z" fill="#555" />
          </Glyph>
          <Caret />
        </button>
        <button aria-label="Look at" className="ml-[7px]">
          <Glyph box="0 0 17 17" className={navIcon}>
            <path d="M1.500 6h12v9h-12zM13.500 6l2 1v8h-2" fill="#ddd" stroke="#888" />
            <path d="M3.500 8.500h8v4h-8z" fill="#aab3c0" stroke="#666" />
            <path d="M2 4q3-2.500 7-2.500L8.500 0 13 2.200 9 4.500V3.300Q5.500 3 4 5z" fill="#777" />
          </Glyph>
        </button>
        <button aria-label="Pan" className="ml-2.5">
          <Glyph box="0 0 17 17" className={navIcon}>
            <path d="M5 16.500Q3.500 13 .8 9.500q.7-2 3 .5L3.500 3.500Q4 1.500 5.500 3L6.500 8 6.500 1.500Q7.500 0 8.500 1.500L9 7.500 10.500 2Q12 1 12.500 2.500L12 8.500l1.500-4Q15.500 3.500 15.500 5.500L14.500 11q-.5 3-2.500 5.500z" fill="#fff" stroke="#777" />
          </Glyph>
        </button>
        <button aria-label="Zoom" className="ml-2.5">
          <Glyph box="0 0 17 17" className={navIcon}>
            <circle cx="6" cy="6.500" r="5.200" fill="#f4fbf8" stroke="#777" />
            <path d="M10 10.500l5.500 5.500" stroke="#333" strokeWidth="2.400" />
            <path d="M12.500 3h4M14.500 1v4M12.500 7h4" stroke="#444" />
          </Glyph>
        </button>
        <button aria-label="Fit" className="ml-2.5 flex items-center gap-[5px]">
          <Glyph box="0 0 17 17" className={navIcon}>
            <path d="M1 1h15v15H1z" stroke="#999" strokeDasharray="3 2" />
            <circle cx="7.500" cy="6.500" r="5.200" fill="#f4fbf8" stroke="#777" />
            <path d="M11 10.500l5 5" stroke="#333" strokeWidth="2.400" />
          </Glyph>
          <Caret />
        </button>
        <button aria-label="Display settings" className="ml-2 flex items-center gap-[3px]">
          <Glyph box="0 0 17 17" className={navIcon}>
            <path d="M1 1h15.500v11.500H1zM5 16h8M7 12.500h4V16H7z" fill="#e4e4e4" stroke="#888" />
            <path d="M3 3h11.500v7.500H3z" fill="#8bb0e2" stroke="#5c7fb5" />
          </Glyph>
          <Caret />
        </button>
        <button aria-label="Grid and snaps" className="ml-1.5 flex items-center gap-1">
          <Glyph box="0 0 17 17" className={navIcon}>
            <path d="M1 1h15v15H1z" fill="#eee" stroke="#777" />
            <path d="M1 4h15M1 7h15M1 10h15M1 13h15M4 1v15M7 1v15M10 1v15M13 1v15" stroke="#888" />
          </Glyph>
          <Caret />
        </button>
        <button aria-label="Viewports" className="ml-1.5 flex items-center gap-[3px]">
          <Glyph box="0 0 17 17" className={navIcon}>
            <path d="M1 2h15v13H1z" fill="#8fb2de" stroke="#5d7fae" />
            <path d="M8.500 2v13M1 8.500h15" stroke="#47628c" strokeWidth="1.300" />
          </Glyph>
          <Caret />
        </button>
      </div>
    </div>
  );
}

/* ---------- timeline ---------- */

const transport: [string, string][] = [
  ["Go to start", "M0 0h2v12H0zM12 0v12L2.500 6z"],
  ["Step back", "M9 0v12L0 6zM10.500 4h2v4h-2z"],
  ["Play", "M1 -1.500v15l11.500-7.500z"],
  ["Step forward", "M4 0v12l9-6zM.5 4h2v4h-2z"],
  ["Go to end", "M11 0h2v12h-2zM1 0v12l9.500-6z"],
];

function Timeline() {
  return (
    <footer className="flex h-10 shrink-0 items-stretch border-t border-[#d9d9d9] bg-[#f1f1f1] pr-3 pl-[11px]">
      <div className="flex w-[139px] items-center gap-[13px] pt-[9px] text-[#555]">
        {transport.map(([name, d]) => (
          <button key={name} aria-label={name}>
            <Glyph box="0 0 13 12" className="h-3 w-[13px]"><path d={d} fill="currentColor" /></Glyph>
          </button>
        ))}
      </div>
      <div className="flex">
        <button aria-label="Extrude feature" className="flex w-[25px] flex-col items-start pt-[15px]">
          <Glyph box="0 0 18 18" className="size-[18px]">
            <path d="M1 6l5-5h7l3 3v8l-3 4.500H1z" fill="#ccd1db" stroke="#666" />
            <path d="M1.500 6L6 1.500h7L9.500 6z" fill="#fff" />
            <path d="M9.500 6q4 1 4 6v4M16.500 5.500v7" stroke="#555" strokeWidth="1.300" />
          </Glyph>
          <span className="mt-[3px] ml-[9px] h-[3px] w-px bg-[#aaa]" />
        </button>
        <button aria-label="Plane feature" className="flex w-[25px] flex-col items-start pt-[15px]">
          <Glyph box="75 273 104 104" className="size-[18px]">
            <path d="M79 306l25-27h30l-27 26v68H79z" fill="#e2e2e2" stroke="#777" strokeWidth="4" />
            <path d="M107 305l30-26v63l-30 31z" fill="#43bd70" />
            <path d="M146 307l28-27v60l-28 31z" fill="#e6854f" />
          </Glyph>
          <span className="mt-[3px] ml-[9px] h-[3px] w-px bg-[#aaa]" />
        </button>
        <button aria-label="Mirror feature" className="flex w-[15px] flex-col items-start pt-[15px]">
          <Glyph box="0 0 16 18" className="h-[18px] w-4">
            <path d="M7 2v14H1z" fill="#fff" stroke="#777" />
            <path d="M8.500 1l6.500 15.500H8.500z" fill={blue} stroke={deep} />
          </Glyph>
          <span className="mt-[3px] ml-[9px] h-[3px] w-px bg-[#aaa]" />
        </button>
        <button aria-label="Timeline marker" className="flex items-end">
          <Glyph box="0 0 13 29" className="h-[29px] w-[13px]">
            <path d="M0 0h13v4L9 8H4L0 4z" fill="#555" />
            <path d="M6.500 7v22" stroke="#555" strokeWidth="2" />
          </Glyph>
        </button>
      </div>
      <button aria-label="Preferences" className="ml-auto flex items-center pt-2.5 text-[#808080]">
        <Gear className="size-4" hole="#f1f1f1" />
      </button>
    </footer>
  );
}

export default function App() {
  return (
    <div className="flex min-h-screen flex-col bg-white pb-6 font-['Liberation_Sans',Arial,sans-serif]">
      <div className="flex flex-1 flex-col overflow-hidden rounded-t-lg border-l border-[#b5b5b5]">
        <TitleBar />
        <DocumentBar />
        <Ribbon />
        <main className="relative min-h-[560px] flex-1 bg-white">
          <div className="flex justify-center pr-[109px]">
            <Model />
          </div>
          <BrowserPanel />
          <ViewCube />
          <div className="absolute bottom-[5px] left-1">
            <PanelBar title="COMMENTS" sign="plus" />
          </div>
          <NavBar />
          <button aria-label="Assistant" className="absolute right-3 bottom-2">
            <Glyph box="0 0 15 15" className="size-[15px]">
              <path d="M7.500.5a7 7 0 1 0 0 14h7v-7a7 7 0 0 0-7-7z" fill="#000" />
              <path d="M2.800 9.800Q5.500 6 10.500 5.300L11.500 9.500M6 9.500l5-1.800" stroke="#fff" strokeWidth="1.600" />
            </Glyph>
          </button>
        </main>
        <Timeline />
      </div>
    </div>
  );
}
